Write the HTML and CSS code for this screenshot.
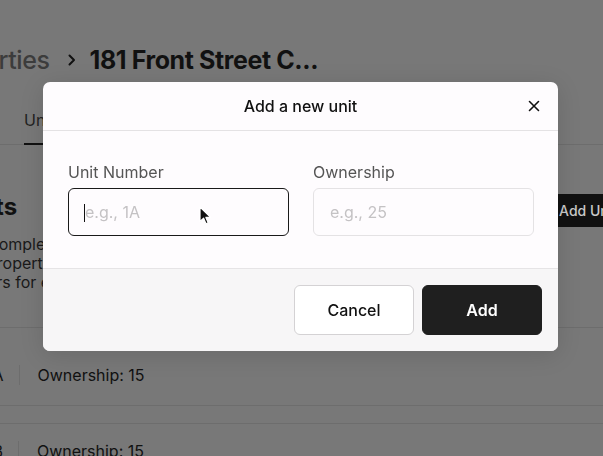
FILE: index.html
```html
<!DOCTYPE html>
<html lang="en">
<head>
<meta charset="UTF-8">
<meta name="viewport" content="width=device-width, initial-scale=1.0">
<title>181 Front Street - Units</title>
<link rel="stylesheet" href="styles.css">
</head>
<body>
<div class="page">
    <div class="crumbs">
        <span class="crumb-parent">Properties</span>
        <svg class="crumb-sep" width="14" height="14" viewBox="0 0 14 14"><path d="M4.5 2.5 L9 7 L4.5 11.5" fill="none" stroke="#111" stroke-width="2" stroke-linecap="round" stroke-linejoin="round"/></svg>
        <span class="crumb-current">181 Front Street C...</span>
    </div>

    <div class="tabs">
        <span class="tab active">Units</span>
        <span class="tab">Documents</span>
    </div>

    <div class="units-head">
        <div class="units-info">
            <h2>Units</h2>
            <p>Complete the units of this<br>property and add the own-<br>ers for each unit.</p>
        </div>
        <button class="add-unit" type="button">Add Unit</button>
    </div>

    <div class="unit-list">
        <div class="unit-row">
            <span class="unit-name">Unit 1A</span>
            <span class="unit-own">Ownership: 15</span>
        </div>
        <div class="unit-row">
            <span class="unit-name">Unit 1B</span>
            <span class="unit-own">Ownership: 15</span>
        </div>
    </div>
</div>

<div class="overlay">
    <div class="modal">
        <div class="modal-head">
            <h3>Add a new unit</h3>
            <button class="close" type="button" aria-label="Close">
                <svg width="12" height="12" viewBox="0 0 12 12"><path d="M1.5 1.5 L10.5 10.5 M10.5 1.5 L1.5 10.5" stroke="#111" stroke-width="1.6" stroke-linecap="round"/></svg>
            </button>
        </div>
        <form class="modal-body" id="unitForm">
            <div class="field">
                <label for="unitNumber">Unit Number</label>
                <div class="input-wrap">
                    <input type="text" id="unitNumber" class="focused" placeholder="e.g., 1A">
                    <span class="caret"></span>
                </div>
            </div>
            <div class="field">
                <label for="ownership">Ownership</label>
                <div class="input-wrap">
                    <input type="number" id="ownership" placeholder="e.g., 25">
                </div>
            </div>
        </form>
        <div class="modal-foot">
            <button class="btn btn-light" type="button">Cancel</button>
            <button class="btn btn-dark" type="button">Add</button>
        </div>
    </div>
</div>

<svg class="pointer" width="14" height="20" viewBox="0 0 14 20"><path d="M1 1 L1 15.5 L4.6 12.2 L7 17.8 L9.2 16.8 L6.9 11.4 L11.6 11.4 Z" fill="#111" stroke="#fff" stroke-width="1.2" stroke-linejoin="round"/></svg>
</body>
</html>
```

FILE: styles.css
```css
body {
    margin: 0;
    padding: 0;
    font-family: Inter, "Noto Sans", sans-serif;
    background-color: #787878;
    color: #111;
    width: 603px;
    height: 456px;
    overflow: hidden;
}

.page {
    padding-top: 44px;
}

/* breadcrumb */
.crumbs {
    display: flex;
    align-items: center;
    margin-left: -70px;
    height: 32px;
    font-size: 25px;
    letter-spacing: -0.4px;
}

.crumb-parent {
    color: #3c3c3c;
    font-weight: 500;
}

.crumb-sep {
    margin: 0 11px 0 15px;
}

.crumb-current {
    font-weight: 700;
}

/* tabs */
.tabs {
    display: flex;
    gap: 32px;
    margin-top: 34px;
    padding-left: 24px;
    border-bottom: 1px solid #6d6d6d;
}

.tab {
    font-size: 16px;
    line-height: 20px;
    padding-bottom: 13px;
    color: #222;
}

.tab.active {
    border-bottom: 2px solid #111;
    margin-bottom: -1px;
}

/* units header */
.units-head {
    display: flex;
    justify-content: space-between;
    margin-top: 46px;
    margin-left: -10px;
    width: 639px;
}

.units-info h2 {
    margin: 0 0 0 -34px;
    font-size: 24px;
    line-height: 32px;
    font-weight: 700;
}

.units-info p {
    margin: 12px 0 0 -3px;
    font-size: 16px;
    line-height: 19px;
    color: #1a1a1a;
}

.add-unit {
    margin-top: 3px;
    height: 33px;
    padding: 0 12px;
    border: none;
    border-radius: 4px;
    background-color: #111;
    color: #c9c9c9;
    font-family: inherit;
    font-size: 14px;
    font-weight: 500;
}

/* unit list */
.unit-list {
    margin-top: 35px;
    border-top: 1px solid #6d6d6d;
    padding-top: 17px;
}

.unit-row {
    display: flex;
    align-items: center;
    padding: 20px 0;
    font-size: 16px;
    line-height: 20px;
}

.unit-row + .unit-row {
    margin-top: 17px;
    border-top: 1px solid #6d6d6d;
    padding-top: 17px;
}

.unit-list .unit-row:first-child {
    border-bottom: 1px solid #6d6d6d;
}

.unit-name {
    margin-left: -49px;
    padding-right: 15px;
    color: #111;
}

.unit-own {
    border-left: 1px solid #6d6d6d;
    padding-left: 18px;
    color: #111;
}

/* modal */
.overlay {
    position: fixed;
    top: 0;
    left: 0;
    right: 0;
    bottom: 0;
    display: flex;
    justify-content: flex-start;
    align-items: flex-start;
    padding: 82px 0 0 43px;
}

.modal {
    width: 515px;
    background-color: #fefcfe;
    border-radius: 7px;
    overflow: hidden;
    box-shadow: 0 4px 24px rgba(0, 0, 0, 0.12);
}

.modal-head {
    position: relative;
    height: 48px;
    border-bottom: 1px solid #e4e2e4;
    display: flex;
    align-items: center;
    justify-content: center;
}

.modal-head h3 {
    margin: 0;
    font-size: 16px;
    font-weight: 500;
    color: #111;
}

.close {
    position: absolute;
    right: 18px;
    top: 18px;
    width: 12px;
    height: 12px;
    padding: 0;
    border: none;
    background: none;
    display: flex;
}

.modal-body {
    display: grid;
    grid-template-columns: 1fr 1fr;
    gap: 24px;
    padding: 31px 24px 32px 25px;
    margin: 0;
}

.field label {
    display: block;
    font-size: 16px;
    line-height: 20px;
    color: #555;
    margin-bottom: 6px;
}

.input-wrap {
    position: relative;
}

.input-wrap input {
    width: 100%;
    height: 48px;
    box-sizing: border-box;
    padding: 0 16px;
    border: 1px solid #e4e2e4;
    border-radius: 6px;
    background-color: #fefcfe;
    font-family: inherit;
    font-size: 16px;
    color: #111;
    outline: none;
    -moz-appearance: textfield;
}

.input-wrap input.focused {
    border-color: #1a1a1a;
}

.input-wrap input::placeholder {
    color: #c4c2c4;
}

.caret {
    position: absolute;
    left: 16px;
    top: 16px;
    width: 1px;
    height: 18px;
    background-color: #111;
}

.modal-foot {
    display: flex;
    justify-content: flex-end;
    gap: 8px;
    padding: 16px;
    border-top: 1px solid #e6e4e6;
    background-color: #f7f6f7;
}

.btn {
    width: 120px;
    height: 50px;
    border-radius: 6px;
    font-family: inherit;
    font-size: 16px;
    font-weight: 500;
    cursor: pointer;
}

.btn-light {
    background-color: #fff;
    border: 1px solid #d4d2d4;
    color: #111;
}

.btn-dark {
    background-color: #1f1f1f;
    border: 1px solid #1f1f1f;
    color: #fff;
    font-weight: 600;
}

.pointer {
    position: absolute;
    left: 199px;
    top: 206px;
}
```
